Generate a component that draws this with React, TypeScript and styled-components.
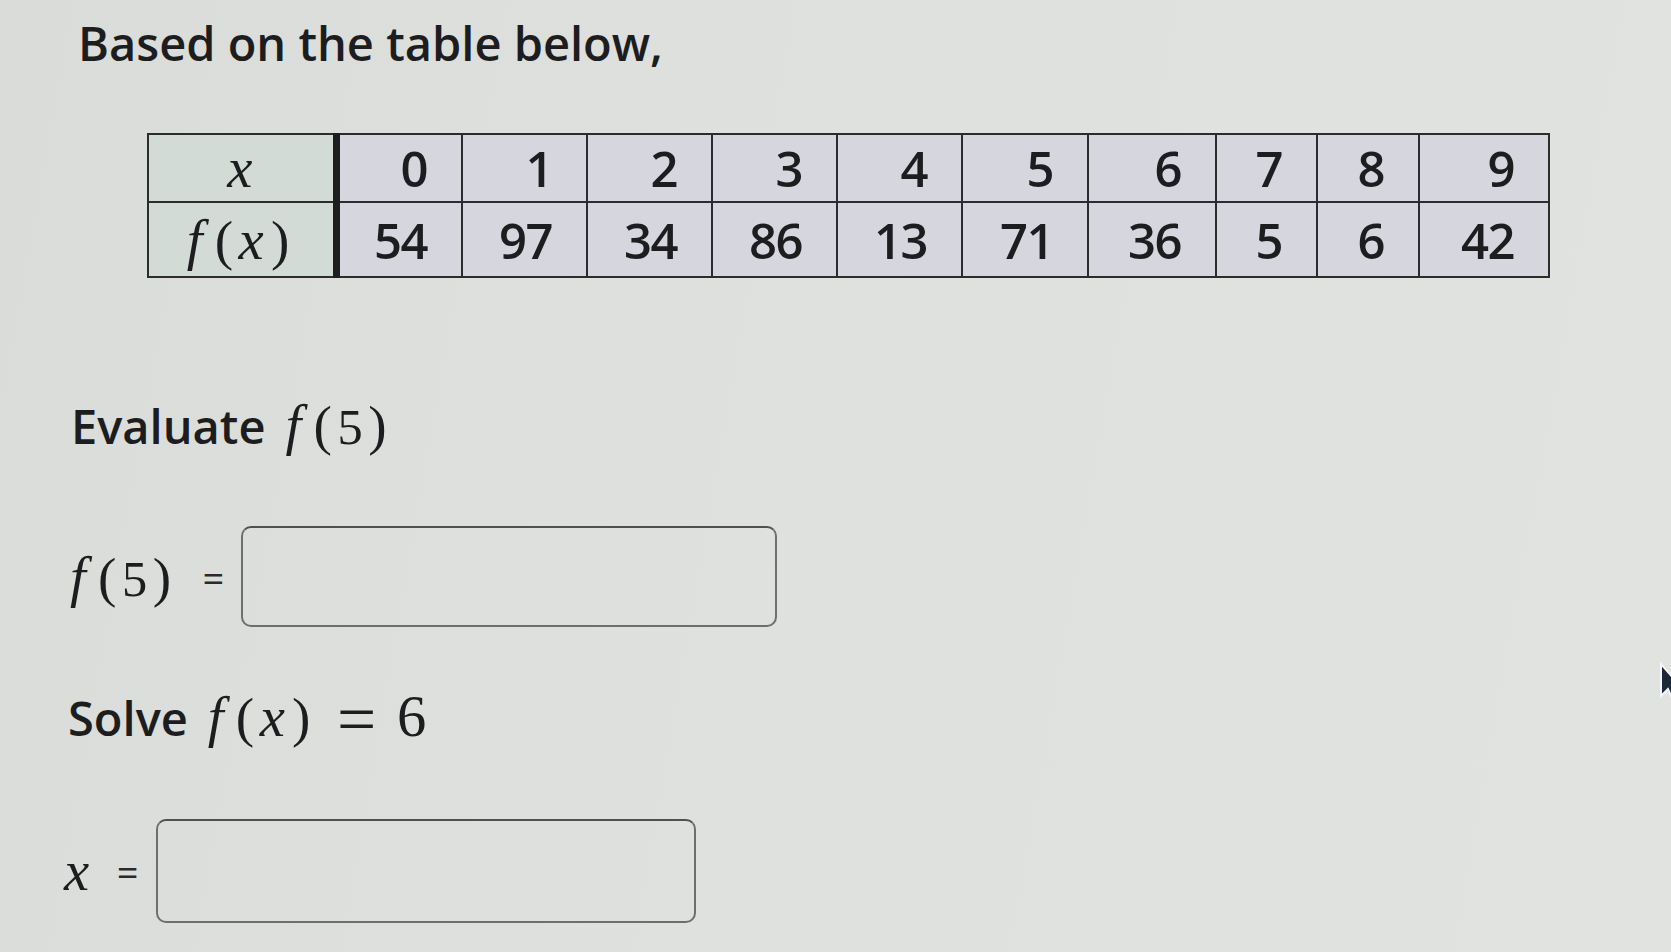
import { createGlobalStyle, styled } from 'styled-components';

const GlobalStyle = createGlobalStyle`
  html,
  body {
    margin: 0;
    padding: 0;
  }

  body {
    background-color: #dde0dc;
    color: #1d1d20;
    font-family: 'Open Sans', 'Liberation Sans', sans-serif;
  }
`;

const COLUMNS = [
  { x: 0, fx: 54, width: 126 },
  { x: 1, fx: 97, width: 125 },
  { x: 2, fx: 34, width: 125 },
  { x: 3, fx: 86, width: 125 },
  { x: 4, fx: 13, width: 125 },
  { x: 5, fx: 71, width: 126 },
  { x: 6, fx: 36, width: 128 },
  { x: 7, fx: 5, width: 101 },
  { x: 8, fx: 6, width: 102 },
  { x: 9, fx: 42, width: 130 },
];

function FOfX({ arg, italicArg }: { arg: string; italicArg?: boolean }) {
  return (
    <>
      <MathVar $gap>f</MathVar>
      <MathParen>(</MathParen>
      {italicArg ? <MathVar>{arg}</MathVar> : <MathNum>{arg}</MathNum>}
      <MathParen>)</MathParen>
    </>
  );
}

function App() {
  return (
    <>
      <GlobalStyle />
      <StyledPage>
        <StyledTitle>Based on the table below,</StyledTitle>

        <StyledTable>
          <colgroup>
            <col style={{ width: 188 }} />
            {COLUMNS.map(column => (
              <col key={column.x} style={{ width: column.width }} />
            ))}
          </colgroup>
          <tbody>
            <tr>
              <StyledHeadCell $height={66}>
                <StyledMath>
                  <MathVar>x</MathVar>
                </StyledMath>
              </StyledHeadCell>
              {COLUMNS.map(column => (
                <StyledValueCell key={column.x}>{column.x}</StyledValueCell>
              ))}
            </tr>
            <tr>
              <StyledHeadCell $height={73}>
                <StyledMath>
                  <FOfX arg="x" italicArg />
                </StyledMath>
              </StyledHeadCell>
              {COLUMNS.map(column => (
                <StyledValueCell key={column.x}>{column.fx}</StyledValueCell>
              ))}
            </tr>
          </tbody>
        </StyledTable>

        <StyledPrompt $top={117} $indent={71}>
          Evaluate
          <StyledMath $lead>
            <FOfX arg="5" />
          </StyledMath>
        </StyledPrompt>

        <StyledAnswerRow $top={68} $indent={70} $height={101}>
          <StyledLabel>
            <StyledMath>
              <FOfX arg="5" />
            </StyledMath>
            <StyledEquals>=</StyledEquals>
          </StyledLabel>
          <StyledInput type="text" $width={536} aria-label="f(5)" />
        </StyledAnswerRow>

        <StyledPrompt $top={60} $indent={68}>
          Solve
          <StyledMath $lead>
            <FOfX arg="x" italicArg />
            <MathOp>=</MathOp>
            <MathNum $scale={1.22}>6</MathNum>
          </StyledMath>
        </StyledPrompt>

        <StyledAnswerRow $top={69} $indent={64} $height={104}>
          <StyledLabel>
            <StyledMath>
              <MathVar>x</MathVar>
            </StyledMath>
            <StyledEquals>=</StyledEquals>
          </StyledLabel>
          <StyledInput type="text" $width={540} aria-label="x" />
        </StyledAnswerRow>

        <StyledCursor width="22" height="40" viewBox="0 0 22 40">
          <path d="M2 2 L2 34 L9 27 L14 38 L19 36 L14 25 L22 25 Z" fill="#1a2838" stroke="#f4f6f8" strokeWidth="2" />
        </StyledCursor>
      </StyledPage>
    </>
  );
}

export default App;

const StyledPage = styled.div`
  position: relative;
  display: flex;
  flex-direction: column;
  align-items: flex-start;

  min-height: 100vh;
  box-sizing: border-box;
  padding-top: 15px;
  overflow: hidden;

  background: linear-gradient(100deg, #d9dcd8 0%, #dee1dd 45%, #e1e3e0 100%);
`;

const StyledTitle = styled.h1`
  margin: 0 0 0 78px;

  font-size: 47px;
  font-weight: 600;
  line-height: 56px;
`;

const StyledTable = styled.table`
  margin: 62px 0 0 147px;

  table-layout: fixed;
  border-collapse: collapse;
  width: 1401px;

  border: 2px solid #2c2c2e;
`;

const StyledHeadCell = styled.td<{ $height: number }>`
  height: ${({ $height }) => $height}px;
  padding: 0;

  border: 2px solid #2c2c2e;
  border-right: 7px solid #1e1e20;
  background-color: #d3dbd7;

  text-align: center;
  vertical-align: middle;
`;

const StyledValueCell = styled.td`
  padding: 0 34px 0 0;

  border: 2px solid #2c2c2e;
  background-color: #d5d6de;

  font-size: 49px;
  font-weight: 600;
  text-align: right;
  letter-spacing: -1.5px;
  vertical-align: middle;
`;

const StyledPrompt = styled.p<{ $top: number; $indent: number }>`
  margin: ${({ $top }) => $top}px 0 0 ${({ $indent }) => $indent}px;

  font-size: 47px;
  font-weight: 600;
  line-height: 60px;
`;

const StyledMath = styled.span<{ $lead?: boolean }>`
  margin-left: ${({ $lead }) => ($lead ? '20px' : '0')};

  font-family: 'Liberation Serif', 'DejaVu Serif', serif;
  font-size: 48px;
  font-weight: 400;
  white-space: nowrap;
`;

const MathVar = styled.span<{ $gap?: boolean }>`
  font-size: 1.18em;
  font-style: italic;
  margin-right: ${({ $gap }) => ($gap ? '0.12em' : '0.03em')};
`;

const MathParen = styled.span`
  display: inline-block;
  margin: 0 0.1em;

  font-size: 1.15em;
`;

const MathNum = styled.span<{ $scale?: number }>`
  font-size: ${({ $scale }) => $scale ?? 1.05}em;
  font-style: normal;
`;

const MathOp = styled.span`
  margin: 0 0.3em;

  font-size: 1.45em;
  vertical-align: -0.1em;
`;

const StyledAnswerRow = styled.div<{ $top: number; $indent: number; $height: number }>`
  display: flex;
  align-items: center;
  gap: 17px;

  height: ${({ $height }) => $height}px;
  margin: ${({ $top }) => $top}px 0 0 ${({ $indent }) => $indent}px;
`;

const StyledLabel = styled.div`
  display: flex;
  align-items: center;
  gap: 26px;
`;

const StyledEquals = styled.span`
  font-size: 38px;
  font-weight: 500;
  color: #2a2a2c;
`;

const StyledInput = styled.input<{ $width: number }>`
  width: ${({ $width }) => $width}px;
  height: 100%;
  box-sizing: border-box;

  border: 2px solid #6d6f6e;
  border-top-color: #4f5150;
  border-radius: 10px;
  background-color: transparent;
  outline: none;
`;

const StyledCursor = styled.svg`
  position: absolute;
  top: 662px;
  left: 1659px;
`;
